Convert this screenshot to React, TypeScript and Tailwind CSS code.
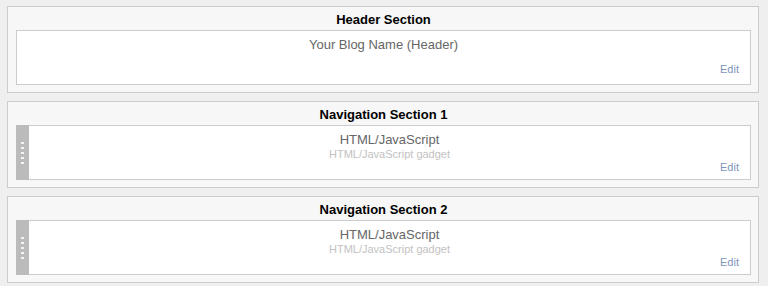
const sections = [
  { title: "Header Section", name: "Your Blog Name (Header)", sub: "", handle: false },
  { title: "Navigation Section 1", name: "HTML/JavaScript", sub: "HTML/JavaScript gadget", handle: true },
  { title: "Navigation Section 2", name: "HTML/JavaScript", sub: "HTML/JavaScript gadget", handle: true },
];

function Handle() {
  return (
    <div className="flex w-[13px] shrink-0 flex-col items-center justify-center gap-[3px] bg-[#bbbbbb]">
      {[0, 1, 2, 3, 4].map((i) => (
        <span key={i} className="block h-[2px] w-[3px] bg-[#f4f4f4]" />
      ))}
    </div>
  );
}

export default function App() {
  return (
    <div
      className="flex h-[286px] w-[768px] flex-col gap-2 bg-[#efefef] pl-[7px] pt-[6px]"
      style={{ fontFamily: '"Liberation Sans", Arial, Helvetica, sans-serif' }}
    >
      {sections.map((s) => (
        <section
          key={s.title}
          className="flex w-[752px] flex-col border border-[#cccccc] bg-[#f7f7f7] pb-[7px] pl-2 pr-[7px]"
        >
          <h2 className="h-[23px] pt-[5px] text-center text-[13px] font-bold leading-[15px] text-black">
            {s.title}
          </h2>
          <div className="flex h-[55px]">
            {s.handle && <Handle />}
            <div
              className={`flex flex-1 flex-col border border-[#cccccc] bg-white px-[11px] pb-[8px] pt-[6px] ${
                s.handle ? "border-l-0" : ""
              }`}
            >
              <div className="text-center text-[13px] leading-[16px] text-[#666666]">{s.name}</div>
              {s.sub && (
                <div className="text-center text-[11px] leading-[13px] text-[#c2c2c2]">{s.sub}</div>
              )}
              <a className="mt-auto self-end text-[11px] leading-[13px] text-[#8095ba]">Edit</a>
            </div>
          </div>
        </section>
      ))}
    </div>
  );
}
